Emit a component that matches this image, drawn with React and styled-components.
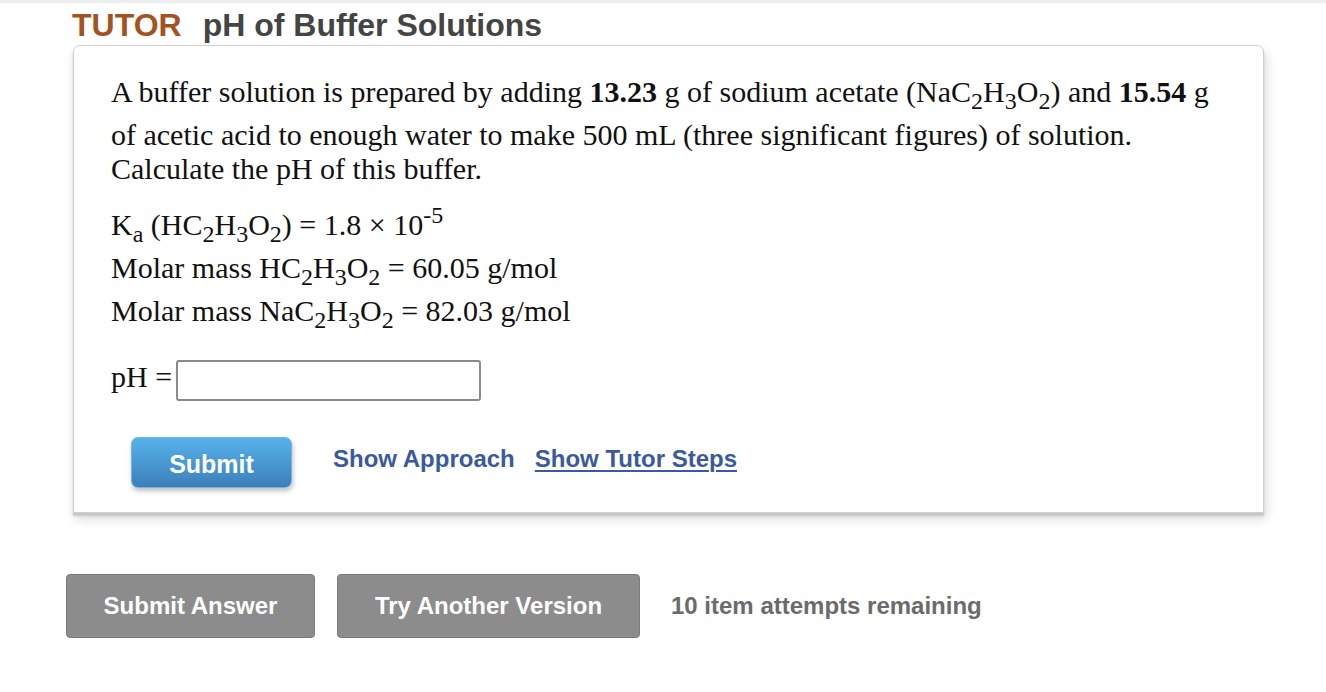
import React from "react"
import styled, { createGlobalStyle } from "styled-components"

const GlobalStyle = createGlobalStyle`
    html, body {
        margin: 0;
        padding: 0;
        background: #fff;
    }
    body {
        font-family: "Liberation Sans", Arial, sans-serif;
    }
`

const Page = styled.div`
    width: 1326px;
    height: 692px;
    border-top: 3px solid #eeeeee;
    box-sizing: border-box;
    padding: 0 0 0 66px;
`

const Title = styled.h1`
    margin: 0 0 0 6px;
    height: 42px;
    padding-top: 5px;
    box-sizing: border-box;
    font-size: 32px;
    line-height: 34px;
    font-weight: bold;
    color: #444444;
`

const Tag = styled.span`
    color: #a2531f;
    margin-right: 21px;
`

const Card = styled.div`
    width: 1191px;
    height: 468px;
    box-sizing: border-box;
    margin-left: 7px;
    background: #fff;
    border: 1px solid #d0d0d0;
    border-radius: 7px 7px 0 0;
    box-shadow: 0 3px 2px #c6c6c6, 2px 6px 12px rgba(0, 0, 0, 0.15);
    padding: 29px 36px 0 37px;
    font-family: "Liberation Serif", "Times New Roman", serif;
    font-size: 30px;
    color: #111;
    display: flex;
    flex-direction: column;
`

const Para = styled.p`
    margin: 0;
    line-height: 34px;
`

const Facts = styled.div`
    margin-top: 22px;
    line-height: 34px;
`

const Line = styled.div``

/* the subscript drops below the baseline and pushes the next line down */
const Sub = styled.sub`
    font-size: 0.8em;
    line-height: 34px;
    vertical-align: -7px;
`

const Sup = styled.sup`
    font-size: 0.8em;
    line-height: 0;
    vertical-align: 12px;
`

const AnswerRow = styled.div`
    display: flex;
    align-items: flex-start;
    gap: 4px;
    margin-top: 23px;
    line-height: 34px;
`

const AnswerInput = styled.input`
    width: 305px;
    height: 41px;
    box-sizing: border-box;
    border: 2px solid #8a8a8a;
    border-radius: 3px;
    background: #fff;
    outline: none;
`

const ActionRow = styled.div`
    display: flex;
    align-items: center;
    gap: 19px;
    margin-top: 36px;
    padding-left: 20px;
    font-family: "Liberation Sans", Arial, sans-serif;
`

const BlueButton = styled.button`
    width: 161px;
    height: 51px;
    box-sizing: border-box;
    margin-right: 22px;
    border: 1px solid #6fb5e6;
    border-radius: 7px;
    background: linear-gradient(#56b2ea, #3d7fba);
    color: #fff;
    font-family: "Liberation Sans", Arial, sans-serif;
    font-weight: bold;
    font-size: 25px;
    box-shadow: 1px 3px 5px rgba(0, 0, 0, 0.25);
    padding: 4px 0 0;
`

const Links = styled.div`
    display: flex;
    gap: 20px;
    padding-bottom: 8px;
`

const LinkText = styled.a`
    color: #3b5a9e;
    font-weight: bold;
    font-size: 24px;
    text-decoration: ${(p) => (p.$underline ? "underline" : "none")};
    text-underline-offset: 3px;
    text-decoration-thickness: 2px;
`

const Footer = styled.div`
    display: flex;
    align-items: center;
    gap: 22px;
    margin-top: 61px;
`

const GrayButton = styled.button`
    width: ${(p) => p.$w}px;
    height: 64px;
    box-sizing: border-box;
    border: 1px solid #7a7a7a;
    border-radius: 4px;
    background: #8c8c8c;
    color: #fff;
    font-family: "Liberation Sans", Arial, sans-serif;
    font-weight: bold;
    font-size: 24px;
    padding: 0;
`

const Attempts = styled.span`
    margin-left: 9px;
    color: #6b6b6b;
    font-weight: bold;
    font-size: 24px;
`

const App = () => {
    return (
        <>
            <GlobalStyle />
            <Page>
                <Title>
                    <Tag>TUTOR</Tag>pH of Buffer Solutions
                </Title>
                <Card>
                    <Para>
                        A buffer solution is prepared by adding <b>13.23</b> g of sodium acetate
                        (NaC<Sub>2</Sub>H<Sub>3</Sub>O<Sub>2</Sub>) and <b>15.54</b> g of
                        acetic acid to enough water to make 500 mL (three significant figures) of solution.
                        Calculate the pH of this buffer.
                    </Para>
                    <Facts>
                        <Line>
                            K<Sub>a</Sub> (HC<Sub>2</Sub>H<Sub>3</Sub>O<Sub>2</Sub>) = 1.8 × 10<Sup>-5</Sup>
                        </Line>
                        <Line>
                            Molar mass HC<Sub>2</Sub>H<Sub>3</Sub>O<Sub>2</Sub> = 60.05 g/mol
                        </Line>
                        <Line>
                            Molar mass NaC<Sub>2</Sub>H<Sub>3</Sub>O<Sub>2</Sub> = 82.03 g/mol
                        </Line>
                    </Facts>
                    <AnswerRow>
                        <span>pH =</span>
                        <AnswerInput type="text" />
                    </AnswerRow>
                    <ActionRow>
                        <BlueButton>Submit</BlueButton>
                        <Links>
                            <LinkText>Show Approach</LinkText>
                            <LinkText $underline>Show Tutor Steps</LinkText>
                        </Links>
                    </ActionRow>
                </Card>
                <Footer>
                    <GrayButton $w={249}>Submit Answer</GrayButton>
                    <GrayButton $w={303}>Try Another Version</GrayButton>
                    <Attempts>10 item attempts remaining</Attempts>
                </Footer>
            </Page>
        </>
    )
}

export default App
